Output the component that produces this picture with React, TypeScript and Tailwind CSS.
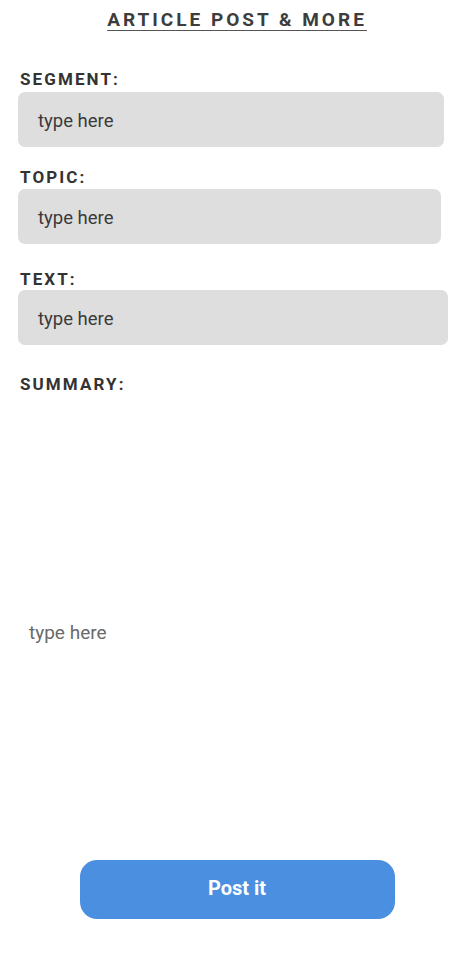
import React from "react";

function Label({ children, className = "" }: { children: React.ReactNode; className?: string }) {
  return (
    <div
      className={`px-[20px] text-[17px] leading-[20px] font-bold tracking-[2.1px] text-[#333333] ${className}`}
    >
      {children}
    </div>
  );
}

function Field({ className = "" }: { className?: string }) {
  return (
    <div
      className={`ml-[18px] h-[55px] rounded-[7px] bg-[#dedede] flex items-center pl-[20px] pt-[2px] text-[18.5px] leading-[24px] text-[#3a3a3a] ${className}`}
    >
      type here
    </div>
  );
}

export default function App() {
  return (
    <div
      className="w-full h-[969px] bg-white flex flex-col"
      style={{ fontFamily: "Roboto, 'Noto Sans', sans-serif" }}
    >
      <div className="pt-[8px] text-center text-[19px] leading-[24px] font-bold tracking-[3px] text-[#3d3d3d] underline decoration-[1px] underline-offset-[4px] decoration-[#555555]">
        ARTICLE POST &amp; MORE
      </div>

      <Label className="mt-[37px]">SEGMENT:</Label>
      <Field className="mt-[3px] w-[426px]" />

      <Label className="mt-[20px]">TOPIC:</Label>
      <Field className="mt-[2px] w-[423px]" />

      <Label className="mt-[25px]">TEXT:</Label>
      <Field className="mt-[1px] w-[430px]" />

      <Label className="mt-[29px]">SUMMARY:</Label>

      <div className="flex-1">
        <div className="mt-[227px] pl-[29px] text-[19px] leading-[24px] text-[#6a6a6a]">
          type here
        </div>
      </div>

      <div className="flex justify-center mb-[50px]">
        <button className="w-[315px] h-[59px] rounded-[17px] bg-[#4a8fe0] text-white text-[20px] font-bold pb-[4px]">
          Post it
        </button>
      </div>
    </div>
  );
}
